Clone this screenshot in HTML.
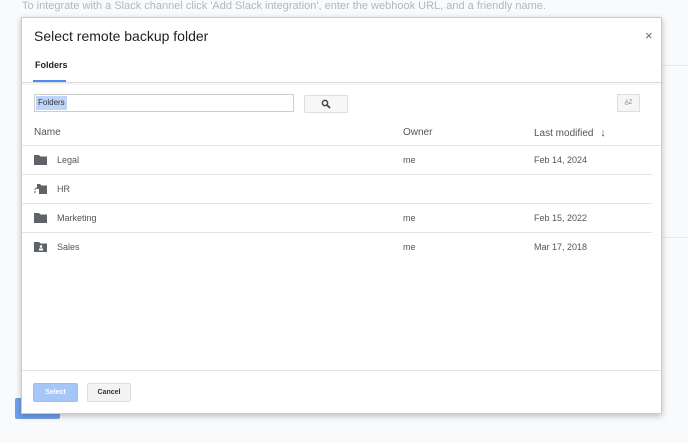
<!DOCTYPE html><html><head><style>
body{margin:0;width:688px;height:443px;background:#f9fafc;position:relative;overflow:hidden;font-family:"Liberation Sans",sans-serif;}
.a{position:absolute}
.t{font-size:10px;color:#555}
</style></head><body>
<div class="a" style="left:22px;top:0;font-size:11px;color:#b3b6bb">To integrate with a Slack channel click 'Add Slack integration', enter the webhook URL, and a friendly name.</div>
<div class="a" style="left:661px;top:65px;width:27px;height:1px;background:#e6e8eb"></div>
<div class="a" style="left:661px;top:237px;width:27px;height:1px;background:#e6e8eb"></div>
<div class="a" style="left:15px;top:398px;width:45px;height:21px;background:#6fa0ea;border-radius:2px"></div>
<div class="a" style="left:21px;top:17px;width:639px;height:395px;background:#fff;border:1px solid #ccc;box-shadow:0 2px 6px rgba(0,0,0,.25)">
 <div class="a" style="left:12px;top:10px;font-size:14px;color:#222">Select remote backup folder</div>
 <div class="a" style="left:623px;top:10px;font-size:13px;color:#666">×</div>
 <div class="a" style="left:13px;top:42px;font-size:9px;font-weight:bold;color:#222">Folders</div>
 <div class="a" style="left:11px;top:62px;width:33px;height:2px;background:#4a8ef0"></div>
 <div class="a" style="left:0;top:64px;width:639px;height:1px;background:#ddd;box-shadow:0 1px 2px rgba(0,0,0,.12)"></div>
 <div class="a" style="left:12px;top:76px;width:258px;height:16px;border:1px solid #ccc"><span class="a" style="left:1px;top:1px;height:14px;line-height:14px;padding:0 2px;background:#bcd5fa;font-size:8px;color:#333">Folders</span></div>
 <div class="a" style="left:282px;top:77px;width:42px;height:16px;border:1px solid #ddd;background:#f7f7f7;border-radius:2px"><svg class="a" style="left:16px;top:3px" width="10" height="10" viewBox="0 0 10 10"><circle cx="4" cy="4" r="2.6" fill="none" stroke="#444" stroke-width="1.5"/><path d="M6 6L9 9" stroke="#444" stroke-width="1.8"/></svg></div>
 <div class="a" style="left:595px;top:76px;width:21px;height:16px;border:1px solid #ddd;background:#f5f5f5;font-size:6px;color:#888;text-align:center;line-height:16px">A̲Z</div>
 <div class="a t" style="left:12px;top:109px">Name</div>
 <div class="a t" style="left:381px;top:109px">Owner</div>
 <div class="a t" style="left:512px;top:109px">Last modified <span style="font-size:11px;margin-left:4px">↓</span></div>
 <div class="a" style="left:0;top:127px;width:639px;height:1px;background:#e5e5e5"></div>
 <div class="a" style="left:0;top:156px;width:630px;height:1px;background:#e5e5e5"></div>
 <div class="a" style="left:0;top:185px;width:630px;height:1px;background:#e5e5e5"></div>
 <div class="a" style="left:0;top:214px;width:630px;height:1px;background:#e5e5e5"></div>
 <svg class="a" style="left:12px;top:136px" width="13" height="11"><path d="M0 1h5l1.5 1.5H13V11H0z" fill="#5f6368"/></svg>
 <div class="a t" style="left:35px;top:137px;font-size:9px">Legal</div><div class="a t" style="left:381px;top:137px;font-size:9px">me</div><div class="a t" style="left:512px;top:137px;font-size:9px">Feb 14, 2024</div>
 <svg class="a" style="left:12px;top:165px" width="13" height="11"><path d="M3 1h3l1.5 1.5H13V11H5V6H3z" fill="#5f6368"/><path d="M1 7a2 2 0 0 1 2-2M1 10v-2" stroke="#5f6368" fill="none"/></svg>
 <div class="a t" style="left:35px;top:166px;font-size:9px">HR</div>
 <svg class="a" style="left:12px;top:194px" width="13" height="11"><path d="M0 1h5l1.5 1.5H13V11H0z" fill="#5f6368"/></svg>
 <div class="a t" style="left:35px;top:195px;font-size:9px">Marketing</div><div class="a t" style="left:381px;top:195px;font-size:9px">me</div><div class="a t" style="left:512px;top:195px;font-size:9px">Feb 15, 2022</div>
 <svg class="a" style="left:12px;top:223px" width="13" height="11"><path d="M0 1h5l1.5 1.5H13V11H0z" fill="#5f6368"/><circle cx="7" cy="5.5" r="1.3" fill="#fff"/><rect x="5" y="7.5" width="4" height="2" fill="#fff"/></svg>
 <div class="a t" style="left:35px;top:224px;font-size:9px">Sales</div><div class="a t" style="left:381px;top:224px;font-size:9px">me</div><div class="a t" style="left:512px;top:224px;font-size:9px">Mar 17, 2018</div>
 <div class="a" style="left:0;top:352px;width:639px;height:1px;background:#e5e5e5"></div>
 <div class="a" style="left:11px;top:365px;width:43px;height:17px;background:#a7c6f8;border:1px solid #9bbdf3;border-radius:2px;color:#fff;font-size:7px;font-weight:bold;text-align:center;line-height:17px">Select</div>
 <div class="a" style="left:65px;top:365px;width:42px;height:17px;background:#f3f3f3;border:1px solid #ddd;border-radius:2px;color:#333;font-size:7px;font-weight:bold;text-align:center;line-height:17px">Cancel</div>
</div>
</body></html>
